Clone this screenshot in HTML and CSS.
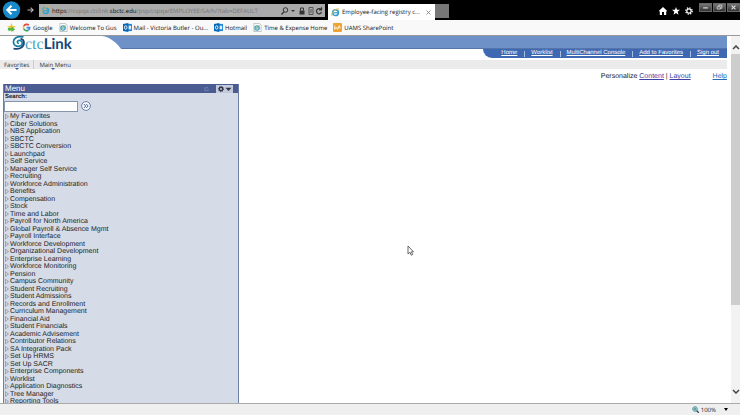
FILE: index.html
```html
<!DOCTYPE html>
<html lang="en">
<head>
<meta charset="utf-8">
<title>Employee-facing registry content</title>
<link rel="stylesheet" href="styles.css">
</head>
<body>
<svg class="defs" aria-hidden="true">
  <symbol id="ie" viewBox="0 0 10 10"><circle cx="5" cy="5.200" r="3.200" fill="none" stroke="#2fa0cf" stroke-width="1.800"/><path d="M2.500 5.300H8" stroke="#2fa0cf" stroke-width="1.300"/><path d="M1 8.800C-.5 6.500 5-.5 9.200 1.200" fill="none" stroke="#e5b93b" stroke-width="1"/></symbol>
  <symbol id="page" viewBox="0 0 10 10"><path d="M1 .5h6l2 2v7H1z" fill="#fff" stroke="#9aa9ae" stroke-width=".7"/><circle cx="4.500" cy="5.500" r="2.400" fill="none" stroke="#4199b5" stroke-width="1.400"/><path d="M2.500 5.500H7" stroke="#4199b5"/><path d="M1.500 8.500L7.500 2" stroke="#88b857" stroke-width=".8"/></symbol>
  <symbol id="outlook" viewBox="0 0 10 10"><path d="M4 1h6v8H4z" fill="#2688d8"/><path d="M6 3h3v4H6z" fill="#d9ecfa"/><path d="M0 1l6-1v10L0 9z" fill="#0868b7"/><ellipse cx="3" cy="5" rx="1.400" ry="1.900" fill="none" stroke="#fff" stroke-width="1"/></symbol>
</svg>
<header class="titlebar">
  <button class="back" aria-label="Back"><svg viewBox="0 0 18 18"><circle cx="9" cy="9" r="8.700" fill="#168acb"/><path d="M14 9H5M9 4.800L4.800 9 9 13.200" fill="none" stroke="#fff" stroke-width="2"/></svg></button>
  <button class="forward" aria-label="Forward"><svg viewBox="0 0 8 8"><path d="M.5 4H7M4.200 1.200L7 4 4.200 6.800" fill="none" stroke="#bbb" stroke-width="1.200"/></svg></button>
  <div class="address">
    <svg class="icon"><use href="#ie"/></svg>
    <span class="url"><b>https</b>://cspqa.ctclink.<b>sbctc.edu</b>/psp/cspqa/EMPLOYEE/SA/h/?tab=DEFAULT</span>
    <svg class="tools" viewBox="0 0 42 8" fill="none" stroke="#333"><circle cx="4.500" cy="3" r="2.300"/><path d="M2.800 4.800L.5 7.500" stroke-width="1.300"/><path d="M10 3h4l-2 2z" fill="#333" stroke="none"/><path d="M18.500 3.500h5v4h-5z" fill="#333" stroke="none"/><path d="M19.500 3.500V1h3v2.500"/><path d="M28 .5h4v7h-4zM29 3h2M29 5h2" stroke="#555"/><path d="M40 2.500A2.600 2.600 0 1 0 40.500 5M40.500.3v2.500H38" stroke-width="1.200"/></svg>
  </div>
  <div class="tab"><svg class="icon"><use href="#ie"/></svg><span>Employee-facing registry c...</span><button aria-label="Close tab"><svg viewBox="0 0 5 5"><path d="M.5.5l4 4m0-4l-4 4" stroke="#777" stroke-width=".8"/></svg></button></div>
  <button class="newtab" aria-label="New tab"></button>
  <div class="browser-tools">
    <button aria-label="Home"><svg viewBox="0 0 8 8"><path d="M4 0l4 3.800-.8.900V8H5V5H3v3H.8V4.700L0 3.800z" fill="#fff"/></svg></button>
    <button aria-label="Favorites"><svg viewBox="0 0 8 8"><path d="M4 0l1 2.800h3L5.700 4.700l.8 3L4 6 1.500 7.700l.8-3L0 2.800h3z" fill="#fff"/></svg></button>
    <button aria-label="Settings"><svg viewBox="0 0 8 8" fill="none" stroke="#fff"><circle cx="4" cy="4" r="2.200" stroke-width="1.200"/><circle cx="4" cy="4" r="3.200" stroke-width="1.300" stroke-dasharray="1.256 1.256"/></svg></button>
  </div>
  <div class="window-tools">
    <button aria-label="Minimize"><svg viewBox="0 0 12 9"><path d="M3 5h6" stroke="#ddd" stroke-width="1.500"/></svg></button>
    <button aria-label="Restore"><svg viewBox="0 0 12 9" fill="none" stroke="#ddd"><path d="M3 3.500h4v3H3zM5 3V1.500h4v4H7"/></svg></button>
    <button aria-label="Close"><svg viewBox="0 0 12 9"><path d="M3.500 2l5 5m0-5l-5 5" stroke="#ddd" stroke-width="1.400"/></svg></button>
  </div>
</header>
<nav class="bookmarks" aria-label="Bookmarks">
  <button class="add" aria-label="Add to favorites bar"><svg class="icon" viewBox="0 0 10 10"><path d="M5 0l1.300 3.200 3.700.3-2.800 2.300.8 3.700L5 7.500 2 9.500l.8-3.700L0 3.500l3.700-.3z" fill="#e9c83c"/><path d="M1 5.500h4V3.800L9 7 5 10V8.300H1z" fill="#55b843"/></svg></button>
  <a href="#"><svg class="icon" viewBox="0 0 10 10" fill="none" stroke-width="1.800"><path d="M7.600 2.500A3.500 3.500 0 0 0 2 3.500" stroke="#e44537"/><path d="M2 3.500a3.500 3.500 0 0 0 0 3" stroke="#efbd32"/><path d="M2 6.500a3.500 3.500 0 0 0 5 1.500" stroke="#38a757"/><path d="M7 8A3.500 3.500 0 0 0 8.500 5.200H5" stroke="#4285e8"/></svg>Google</a>
  <a href="#"><svg class="icon"><use href="#page"/></svg>Welcome To Gus</a>
  <a href="#"><svg class="icon"><use href="#outlook"/></svg>Mail - Victoria Butler - Ou...</a>
  <a href="#"><svg class="icon"><use href="#outlook"/></svg>Hotmail</a>
  <a href="#"><svg class="icon"><use href="#page"/></svg>Time &amp; Expense Home</a>
  <a href="#"><svg class="icon" viewBox="0 0 10 10"><rect width="10" height="10" rx="1" fill="#eda333"/><path d="M2 3v4l2-2 1 2 2-4 1 3" fill="none" stroke="#fff"/></svg>UAMS SharePoint</a>
</nav>
<div class="viewport">
  <main class="page">
    <header class="banner">
      <div class="logo">
        <svg class="swirl" viewBox="0 0 13 14" fill="none"><path d="M11.500 1C5-.5 1 2.500 1.500 6.500c.3 4 5.500 5 8 2.500 2-2.500-.5-5.500-3-4.500-2 1-1 3 .5 3" stroke="#167ba1" stroke-width="1.700"/><path d="M1.500 12.500c5 1.500 10.500-1 10.500-5.500 0-2.500-2-4-3.500-4.300" stroke="#164778" stroke-width="1.700"/></svg>
        <span class="brand">ctc<b>Link</b></span>
      </div>
      <svg class="curve" viewBox="0 0 20 13" preserveAspectRatio="none"><path d="M0 0h20v13h-1C15 7 8 1 0 0z" fill="#6e91c8"/></svg>
      <div class="band"></div>
    </header>
    <nav class="links" aria-label="Site"><div>
      <a href="#">Home</a><a href="#">Worklist</a><a href="#">MultiChannel Console</a><a href="#">Add to Favorites</a><a href="#">Sign out</a>
    </div></nav>
    <nav class="crumbs" aria-label="Menus"><button>Favorites</button><button>Main Menu</button></nav>
    <div class="personalize"><span>Personalize <a href="#">Content</a> | <a href="#">Layout</a></span><a class="help" href="#">Help</a></div>
    <section class="menu">
      <div class="menu-head"><h2>Menu</h2>
        <button class="refresh" aria-label="Refresh"><svg viewBox="0 0 6 6"><path d="M5 1.500H1v3.500h4V3" fill="none" stroke="#8190b8" stroke-width=".8"/></svg></button>
        <button class="options" aria-label="Menu options"><svg viewBox="0 0 16 8"><circle cx="4.500" cy="4" r="1.700" fill="none" stroke="#303448" stroke-width="1.400"/><circle cx="4.500" cy="4" r="2.600" fill="none" stroke="#303448" stroke-dasharray="1 1.040"/><path d="M9 2.800h6L12 6z" fill="#303448"/></svg></button>
      </div>
      <form class="search"><label for="q">Search:</label><div><input id="q" type="text"><button type="button" aria-label="Search"><svg viewBox="0 0 10 10" fill="none" stroke="#3c4f8c"><circle cx="5" cy="5" r="4.400" fill="#f5f8fd" stroke-width=".7"/><path d="M2.800 3l2 2-2 2M5.200 3l2 2-2 2" stroke-width=".9"/></svg></button></div></form>
      <ul>
        <li>My Favorites</li><li>Ciber Solutions</li><li>NBS Application</li><li>SBCTC</li><li>SBCTC Conversion</li><li>Launchpad</li><li>Self Service</li><li>Manager Self Service</li><li>Recruiting</li><li>Workforce Administration</li><li>Benefits</li><li>Compensation</li><li>Stock</li><li>Time and Labor</li><li>Payroll for North America</li><li>Global Payroll &amp; Absence Mgmt</li><li>Payroll Interface</li><li>Workforce Development</li><li>Organizational Development</li><li>Enterprise Learning</li><li>Workforce Monitoring</li><li>Pension</li><li>Campus Community</li><li>Student Recruiting</li><li>Student Admissions</li><li>Records and Enrollment</li><li>Curriculum Management</li><li>Financial Aid</li><li>Student Financials</li><li>Academic Advisement</li><li>Contributor Relations</li><li>SA Integration Pack</li><li>Set Up HRMS</li><li>Set Up SACR</li><li>Enterprise Components</li><li>Worklist</li><li>Application Diagnostics</li><li>Tree Manager</li><li>Reporting Tools</li>
      </ul>
    </section>
  </main>
  <div class="scrollbar">
    <svg viewBox="0 0 8 5"><path d="M1 4l3-3 3 3" fill="none" stroke="#444" stroke-width="1.500"/></svg>
    <div class="track"><div class="thumb"></div></div>
    <svg viewBox="0 0 8 5"><path d="M1 1l3 3 3-3" fill="none" stroke="#444" stroke-width="1.500"/></svg>
  </div>
</div>
<footer class="status"><button><svg class="zoom" viewBox="0 0 7 7"><circle cx="3" cy="3" r="2.300" fill="#cde9ee" stroke="#4d9aa8"/><path d="M1.500 3h3M3 1.500v3" stroke="#26796f" stroke-width=".8"/><path d="M4.700 4.700L6.800 6.800" stroke="#345" stroke-width="1.300"/></svg>100%<svg class="caret" viewBox="0 0 4 3"><path d="M0 0h4L2 3z"/></svg></button></footer>
<svg class="pointer" viewBox="0 0 7 11"><path d="M1 1v8l2-1.800 1.200 3 1.500-.7-1.300-2.700H6.500z" fill="#fff" stroke="#555" stroke-width=".9"/></svg>
</body>
</html>
```
FILE: styles.css
```css
* { box-sizing: border-box; }
body {
  margin: 0;
  height: 100vh;
  display: flex;
  flex-direction: column;
  overflow: hidden;
  background: #fff;
  color: #222;
  font: 7px/7px "Liberation Sans", Arial, sans-serif;
  text-rendering: geometricPrecision;
}
button { display: block; margin: 0; padding: 0; border: 0; background: none; color: inherit; font: inherit; text-rendering: inherit; }
svg { display: block; flex: none; }
.defs { position: absolute; width: 0; height: 0; }
.icon { width: 9px; height: 9px; }

.titlebar { flex: none; display: flex; align-items: flex-start; height: 20px; padding-left: 2px; background: #000; font: 6px/12px "Open Sans", sans-serif; }
.back { padding-top: 1px; }
.back svg { width: 19px; height: 18px; }
.forward { padding: 6px 5px 0 6px; }
.forward svg { width: 7px; height: 8px; }
.address { display: flex; align-items: center; flex: 0 1 286px; height: 13px; margin-top: 4px; padding: 0 2px; gap: 2px; background: #aaa; color: #777; overflow: hidden; }
.url { flex: 1; white-space: nowrap; }
.url b { color: #111; font-weight: 400; }
.tools { width: 42px; height: 8px; }
.tab { display: flex; align-items: center; flex: 0 1 107px; height: 16px; margin: 4px 0 0 3px; padding: 0 4px 0 3px; gap: 2px; background: #fff; color: #111; }
.tab span { flex: 1; white-space: nowrap; }
.tab button svg { width: 5px; height: 5px; }
.newtab { width: 14px; height: 14px; margin-top: 4px; background: #777; }
.browser-tools { display: flex; gap: 5px; margin: 7px 6px 0 auto; }
.browser-tools svg { width: 8px; height: 8px; }
.window-tools { display: flex; gap: 1px; margin-top: 3px; }
.window-tools button { background: linear-gradient(#777, #333); border: 1px solid #666; }
.window-tools svg { width: 11px; height: 7px; }

.bookmarks { flex: none; display: flex; align-items: center; gap: 6px; height: 16px; padding-left: 7px; background: #f9f9f9; border-bottom: 1px solid #999; font: 6px/12px "Open Sans", sans-serif; }
.bookmarks a { display: flex; align-items: center; gap: 2px; color: #111; text-decoration: none; white-space: nowrap; }

.viewport { flex: 1; min-height: 0; display: flex; }
.page { flex: 1; min-width: 0; margin-right: 4px; overflow: hidden; }
.banner { display: flex; height: 13px; }
.logo { display: flex; flex: none; width: 102px; padding-left: 12px; }
.swirl { width: 13px; height: 14px; }
.brand { display: flex; align-items: baseline; color: #4aa4bd; font: 16px/17px "Liberation Serif", serif; }
.brand b { color: #164778; font: bold 15px/17px Lato, sans-serif; }
.curve { width: 20px; height: 13px; }
.band { flex: 1; background: #6e91c8; border-bottom: 1px solid #5575aa; }
.links { display: flex; justify-content: flex-end; height: 11px; }
.links div { display: flex; height: 9px; padding: 1px 8px 0 18px; background: #3f68b2; border-radius: 0 0 0 9px; font-size: 6px; }
.links a { color: #fff; }
.links a + a { margin-left: 7px; padding-left: 7px; background: linear-gradient(#a9bddf, #a9bddf) left center / 1px 6px no-repeat; }
.crumbs { display: flex; height: 9px; padding-left: 4px; background: #ebebeb; color: #333; font: 6px/8px "Open Sans", sans-serif; }
.crumbs button { position: relative; }
.crumbs button::after { content: ""; position: absolute; top: 8px; left: calc(50% - 2px); border: 2px solid transparent; border-top-color: #3a5ca8; }
.crumbs button + button { margin-left: 4px; padding-left: 5px; border-left: 1px solid #ccc; }
.personalize { display: flex; justify-content: flex-end; gap: 22px; height: 15px; padding-top: 4px; }
.personalize a { color: #4040a8; }
.personalize .help { color: #246aba; }

.menu { width: 32%; min-width: 236px; max-width: 236px; margin-left: 3px; background: #d5dce8; border: 1px solid #6d7fa5; border-top: 0; }
.menu-head { display: flex; align-items: center; height: 9px; padding: 0 5px 0 1px; background: #4b5c93; color: #fff; }
h2 { flex: 1; margin: 0; font: 8px/9px "Liberation Sans", Arial, sans-serif; }
.refresh { margin-right: 7px; }
.refresh svg { width: 5px; height: 6px; }
.options { background: #c3cadb; }
.options svg { width: 17px; height: 8px; }
.search { padding-left: 1px; }
.search label { display: block; font: bold 6px/8px "Liberation Sans", Arial, sans-serif; }
.search div { display: flex; align-items: flex-start; gap: 3px; height: 12px; margin-left: -1px; }
.search input { width: 74px; height: 11px; padding: 0 1px; border: 1px solid #8794ad; background: #fff; font: inherit; }
.search svg { width: 10px; height: 10px; }
.menu ul { display: grid; grid-auto-rows: 7px 8px; margin: 0; padding: 0; list-style: none; }
.menu li { display: flex; align-items: center; gap: 1px; padding-left: 1px; white-space: nowrap; }
.menu li::before { content: ""; width: 4px; height: 6px; background: #8d97a8; clip-path: polygon(0 0, 100% 50%, 0 100%, 0 0, 20% 22%, 20% 78%, 70% 50%, 20% 22%); }

.scrollbar { display: flex; flex-direction: column; align-items: center; flex: none; width: 9px; padding: 9px 0; background: #f2f2f2; }
.scrollbar svg { width: 8px; height: 5px; }
.track { flex: 1; align-self: stretch; padding-top: 4px; }
.thumb { height: 75%; background: #cdcdcd; }
.status { flex: none; display: flex; justify-content: flex-end; height: 13px; padding-right: 12px; background: #f0eff0; border-top: 1px solid #aaa; border-bottom: 1px solid #fff; }
.status button { display: flex; align-items: center; gap: 2px; font: 6px/10px "Open Sans", sans-serif; }
.zoom { width: 7px; height: 7px; }
.caret { width: 4px; height: 3px; margin-left: 6px; }
.pointer { position: absolute; left: 407px; top: 245px; width: 7px; height: 11px; }
```
